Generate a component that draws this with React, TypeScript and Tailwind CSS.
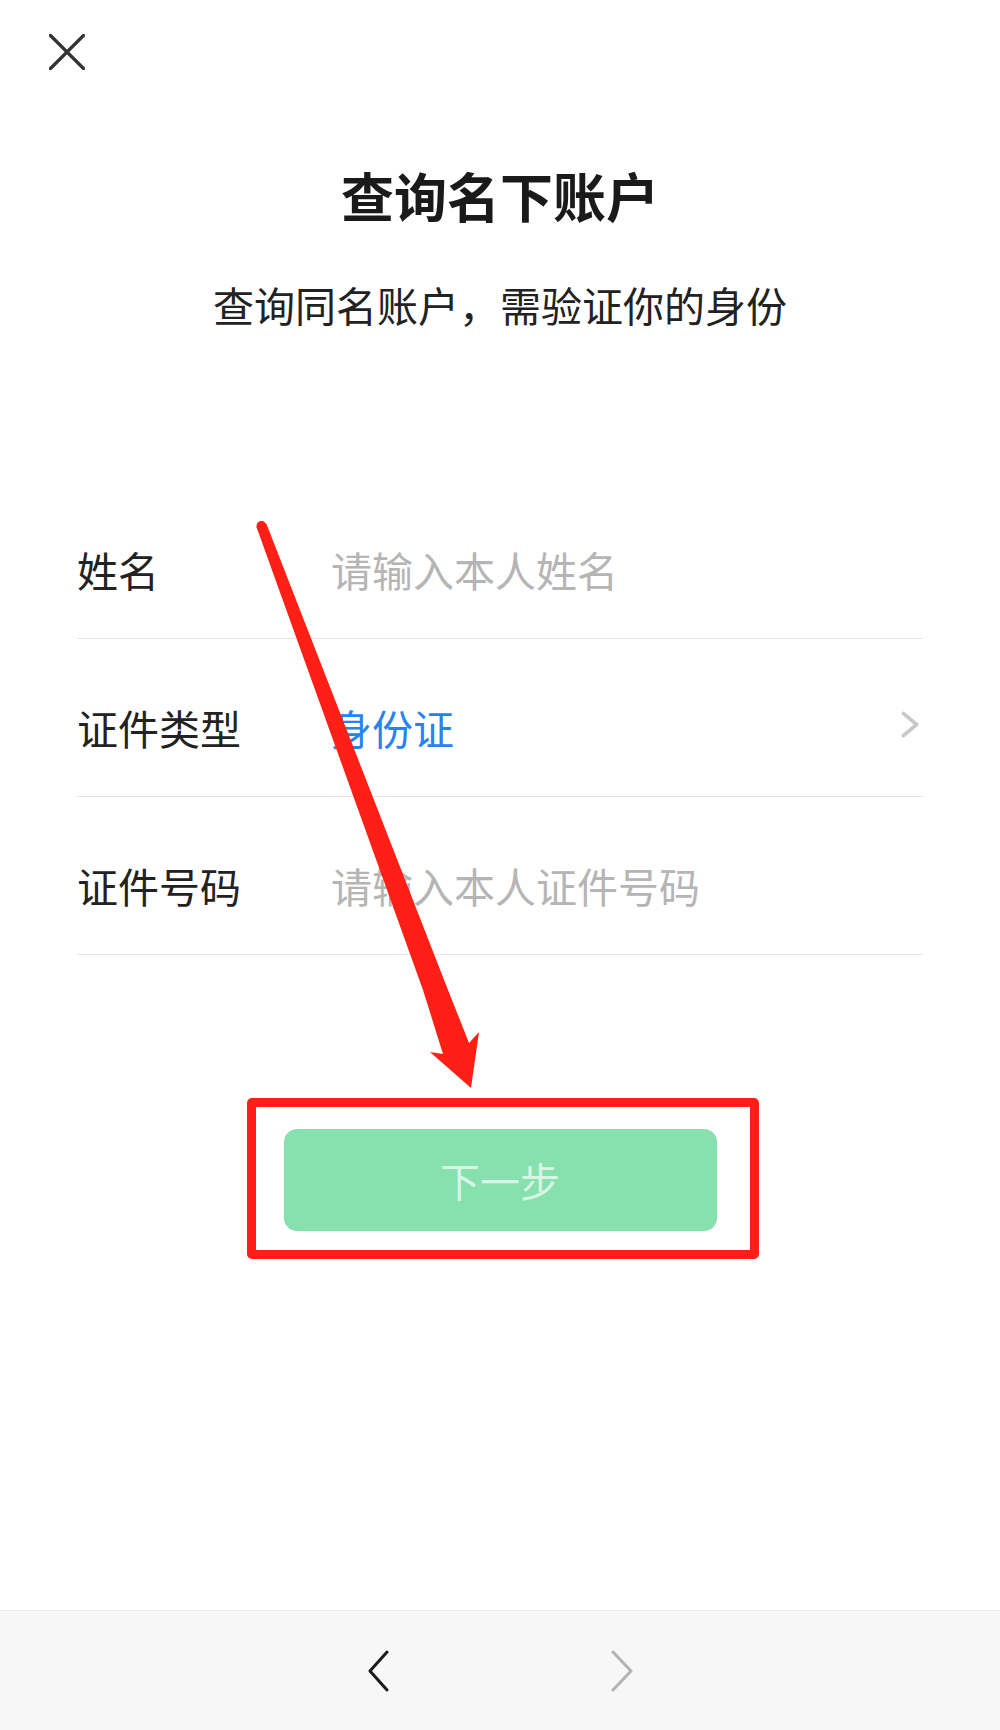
import { useState } from 'react';

const fontCn = "font-['Noto_Sans_CJK_SC','Noto_Sans',sans-serif]";

function CloseIcon() {
  return (
    <svg width="36" height="36" viewBox="0 0 36 36" fill="none">
      <path d="M1.5 1.5L34.5 34.5M34.5 1.5L1.5 34.5" stroke="#333333" strokeWidth="3.2" strokeLinecap="round" />
    </svg>
  );
}

function ChevronRight({ className, color, width, height, strokeWidth }: {
  className?: string;
  color: string;
  width: number;
  height: number;
  strokeWidth: number;
}) {
  const pad = strokeWidth / 2 + 0.5;
  return (
    <svg className={className} width={width} height={height} viewBox={`0 0 ${width} ${height}`} fill="none">
      <polyline
        points={`${pad},${pad} ${width - pad},${height / 2} ${pad},${height - pad}`}
        stroke={color}
        strokeWidth={strokeWidth}
        strokeLinecap="round"
        strokeLinejoin="round"
      />
    </svg>
  );
}

function ChevronLeft({ color }: { color: string }) {
  return (
    <svg width="22" height="42" viewBox="0 0 22 42" fill="none">
      <polyline points="20,2 3,21 20,40" stroke={color} strokeWidth="3" strokeLinecap="round" strokeLinejoin="round" />
    </svg>
  );
}

function FormRow({ label, children }: { label: string; children: React.ReactNode }) {
  return (
    <div className="h-[158px] border-b border-[#e6e6e6] flex items-center pt-[18px]">
      <span className="w-[254px] shrink-0 text-[41px] leading-[48px] text-[#222222]">{label}</span>
      {children}
    </div>
  );
}

export default function App() {
  const [name, setName] = useState('');
  const [idNo, setIdNo] = useState('');

  return (
    <div className={`relative w-[1000px] h-[1730px] bg-white flex flex-col ${fontCn}`}>
      <div className="pt-[34px] pl-[49px] h-[70px]">
        <CloseIcon />
      </div>

      <h1 className="mt-[95px] text-center text-[53px] leading-[60px] font-bold text-[#1a1a1a]">
        查询名下账户
      </h1>
      <p className="mt-[55px] text-center text-[41px] leading-[48px] text-[#222222]">
        查询同名账户，需验证你的身份
      </p>

      <div className="mt-[153px] mx-[77px]">
        <FormRow label="姓名">
          <input
            value={name}
            onChange={(e) => setName(e.target.value)}
            placeholder="请输入本人姓名"
            className="flex-1 min-w-0 bg-transparent outline-none text-[41px] leading-[48px] text-[#222222] placeholder:text-[#b5b5b5]"
          />
        </FormRow>
        <FormRow label="证件类型">
          <span className="flex-1 text-[41px] leading-[48px] text-[#2782f2]">身份证</span>
          <ChevronRight className="mr-[4px] mb-[4px]" color="#c7c7cc" width={18} height={27} strokeWidth={3.6} />
        </FormRow>
        <FormRow label="证件号码">
          <input
            value={idNo}
            onChange={(e) => setIdNo(e.target.value)}
            placeholder="请输入本人证件号码"
            className="flex-1 min-w-0 bg-transparent outline-none text-[41px] leading-[48px] text-[#222222] placeholder:text-[#b5b5b5]"
          />
        </FormRow>
      </div>

      <button className="mt-[174px] mx-auto w-[433px] h-[102px] rounded-[13px] bg-[#86e1ae] text-[40px] text-white/70">
        下一步
      </button>

      <div className="flex-1" />

      {/* 底部前进/后退 */}
      <div className="h-[120px] border-t border-[#ebebeb] bg-[#f7f7f7] flex items-center justify-center gap-[222px]">
        <ChevronLeft color="#1a1a1a" />
        <ChevronRight color="#b3b3b3" width={22} height={42} strokeWidth={3} />
      </div>

      {/* 标注：红框 + 箭头 */}
      <div className="absolute left-[247px] top-[1098px] w-[512px] h-[161px] border-[9px] border-[#ff1f14] rounded-[5px] pointer-events-none" />
      <svg
        className="absolute left-[250px] top-[515px] pointer-events-none"
        width="240"
        height="580"
        viewBox="250 515 240 580"
      >
        <circle cx="261.5" cy="526" r="5" fill="#ff1f14" />
        <polygon
          points="256.5,527 266.5,524 448,990 469,1043 479,1032 471,1088 430,1052 443,1054 423,990"
          fill="#ff1f14"
        />
      </svg>
    </div>
  );
}
